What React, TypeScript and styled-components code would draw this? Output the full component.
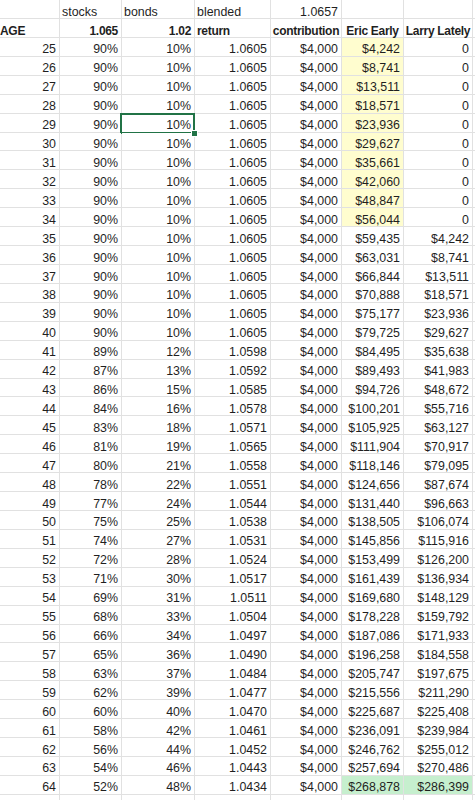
import React from 'react';
import styled, { createGlobalStyle, css } from 'styled-components';

const GlobalStyle = createGlobalStyle`
  html, body {
    margin: 0;
    padding: 0;
    background: #ffffff;
  }
  body {
    font-family: 'Liberation Sans', Arial, sans-serif;
    color: #1f1f1f;
    overflow: hidden;
  }
`;

type Align = 'left' | 'right' | 'center';
type Fill = 'none' | 'yellow' | 'green';

const fills: Record<Fill, string> = {
  none: '#ffffff',
  yellow: '#fffdcf',
  green: '#c6efce',
};

const justify: Record<Align, string> = {
  left: 'flex-start',
  right: 'flex-end',
  center: 'center',
};

const Sheet = styled.div`
  display: grid;
  grid-template-columns: 59px 61px 72px 75px 70px 61px 68px 1fr;
  grid-template-rows: 18px;
  grid-auto-rows: 17.93px;
  gap: 1px;
  background: #e1e1e1;
  width: 475px;
  height: 800px;
  overflow: hidden;
`;

const Cell = styled.div<{ align?: Align; bold?: boolean; fill?: Fill; selected?: boolean }>`
  position: relative;
  display: flex;
  align-items: flex-end;
  justify-content: ${({ align }) => justify[align || 'right']};
  padding: 0 3px 0 ${({ align }) => (align === 'left' ? '2px' : '3px')};
  background: ${({ fill }) => fills[fill || 'none']};
  font-size: 12.4px;
  line-height: 1;
  white-space: nowrap;
  overflow: visible;
  ${({ align }) =>
    align === 'center' &&
    css`
      padding: 0;
    `}
  ${({ bold }) =>
    bold &&
    css`
      font-weight: 700;
      font-size: 12px;
      letter-spacing: -0.3px;
    `}
  ${({ selected }) =>
    selected &&
    css`
      &::after {
        content: '';
        position: absolute;
        left: -2px;
        top: -1px;
        right: -1px;
        bottom: -2px;
        border: 2px solid #217346;
        pointer-events: none;
      }
      &::before {
        content: '';
        position: absolute;
        right: -4px;
        bottom: -5px;
        width: 5px;
        height: 5px;
        background: #217346;
        border: 1px solid #ffffff;
        z-index: 2;
      }
    `}
`;

const FirstCell = styled(Cell)`
  padding-left: 0;
`;

type RowData = [number, string, string, string, string, string];

const rows: RowData[] = [
  [25, '90%', '10%', '1.0605', '$4,242', '0'],
  [26, '90%', '10%', '1.0605', '$8,741', '0'],
  [27, '90%', '10%', '1.0605', '$13,511', '0'],
  [28, '90%', '10%', '1.0605', '$18,571', '0'],
  [29, '90%', '10%', '1.0605', '$23,936', '0'],
  [30, '90%', '10%', '1.0605', '$29,627', '0'],
  [31, '90%', '10%', '1.0605', '$35,661', '0'],
  [32, '90%', '10%', '1.0605', '$42,060', '0'],
  [33, '90%', '10%', '1.0605', '$48,847', '0'],
  [34, '90%', '10%', '1.0605', '$56,044', '0'],
  [35, '90%', '10%', '1.0605', '$59,435', '$4,242'],
  [36, '90%', '10%', '1.0605', '$63,031', '$8,741'],
  [37, '90%', '10%', '1.0605', '$66,844', '$13,511'],
  [38, '90%', '10%', '1.0605', '$70,888', '$18,571'],
  [39, '90%', '10%', '1.0605', '$75,177', '$23,936'],
  [40, '90%', '10%', '1.0605', '$79,725', '$29,627'],
  [41, '89%', '12%', '1.0598', '$84,495', '$35,638'],
  [42, '87%', '13%', '1.0592', '$89,493', '$41,983'],
  [43, '86%', '15%', '1.0585', '$94,726', '$48,672'],
  [44, '84%', '16%', '1.0578', '$100,201', '$55,716'],
  [45, '83%', '18%', '1.0571', '$105,925', '$63,127'],
  [46, '81%', '19%', '1.0565', '$111,904', '$70,917'],
  [47, '80%', '21%', '1.0558', '$118,146', '$79,095'],
  [48, '78%', '22%', '1.0551', '$124,656', '$87,674'],
  [49, '77%', '24%', '1.0544', '$131,440', '$96,663'],
  [50, '75%', '25%', '1.0538', '$138,505', '$106,074'],
  [51, '74%', '27%', '1.0531', '$145,856', '$115,916'],
  [52, '72%', '28%', '1.0524', '$153,499', '$126,200'],
  [53, '71%', '30%', '1.0517', '$161,439', '$136,934'],
  [54, '69%', '31%', '1.0511', '$169,680', '$148,129'],
  [55, '68%', '33%', '1.0504', '$178,228', '$159,792'],
  [56, '66%', '34%', '1.0497', '$187,086', '$171,933'],
  [57, '65%', '36%', '1.0490', '$196,258', '$184,558'],
  [58, '63%', '37%', '1.0484', '$205,747', '$197,675'],
  [59, '62%', '39%', '1.0477', '$215,556', '$211,290'],
  [60, '60%', '40%', '1.0470', '$225,687', '$225,408'],
  [61, '58%', '42%', '1.0461', '$236,091', '$239,984'],
  [62, '56%', '44%', '1.0452', '$246,762', '$255,012'],
  [63, '54%', '46%', '1.0443', '$257,694', '$270,486'],
  [64, '52%', '48%', '1.0434', '$268,878', '$286,399'],
];

const eric = (age: number): Fill => (age <= 34 ? 'yellow' : age === 64 ? 'green' : 'none');

export default function App() {
  return (
    <>
      <GlobalStyle />
      <Sheet>
        <FirstCell />
        <Cell align="left">stocks</Cell>
        <Cell align="left">bonds</Cell>
        <Cell align="left">blended</Cell>
        <Cell>1.0657</Cell>
        <Cell />
        <Cell />
        <Cell />

        <FirstCell align="left" bold>
          AGE
        </FirstCell>
        <Cell bold>1.065</Cell>
        <Cell bold>1.02</Cell>
        <Cell align="left" bold>
          return
        </Cell>
        <Cell align="center" bold>
          contribution
        </Cell>
        <Cell align="center" bold>
          Eric Early
        </Cell>
        <Cell align="center" bold>
          Larry Lately
        </Cell>
        <Cell />

        {rows.map(([age, stocks, bonds, ret, early, lately]) => (
          <React.Fragment key={age}>
            <FirstCell>{age}</FirstCell>
            <Cell>{stocks}</Cell>
            <Cell selected={age === 29}>{bonds}</Cell>
            <Cell>{ret}</Cell>
            <Cell>$4,000</Cell>
            <Cell fill={eric(age)}>{early}</Cell>
            <Cell fill={age === 64 ? 'green' : 'none'}>{lately}</Cell>
            <Cell />
          </React.Fragment>
        ))}

        {Array.from({ length: 8 }).map((_, i) => (
          <Cell key={`pad-${i}`} />
        ))}
      </Sheet>
    </>
  );
}
